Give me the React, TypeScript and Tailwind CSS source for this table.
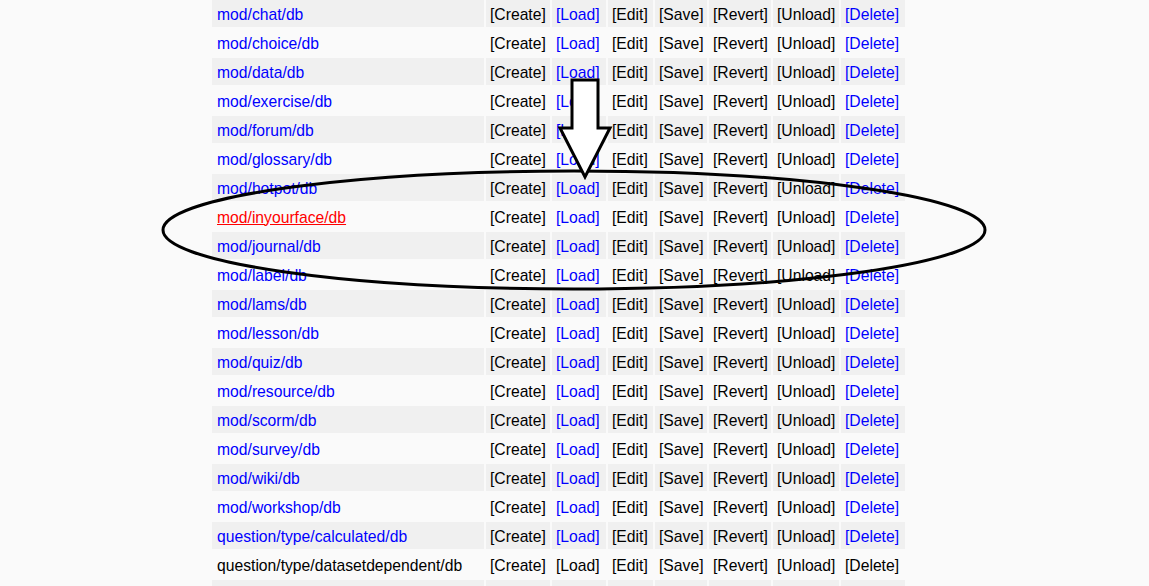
const rows = [
  "mod/chat/db",
  "mod/choice/db",
  "mod/data/db",
  "mod/exercise/db",
  "mod/forum/db",
  "mod/glossary/db",
  "mod/hotpot/db",
  "mod/inyourface/db",
  "mod/journal/db",
  "mod/label/db",
  "mod/lams/db",
  "mod/lesson/db",
  "mod/quiz/db",
  "mod/resource/db",
  "mod/scorm/db",
  "mod/survey/db",
  "mod/wiki/db",
  "mod/workshop/db",
  "question/type/calculated/db",
  "question/type/datasetdependent/db",
  "",
];

const actions = [
  { label: "Create", w: "w-[64px]", link: false },
  { label: "Load", w: "w-[54px]", link: true },
  { label: "Edit", w: "w-[45px]", link: false },
  { label: "Save", w: "w-[52px]", link: false },
  { label: "Revert", w: "w-[62px]", link: false },
  { label: "Unload", w: "w-[66px]", link: false },
  { label: "Delete", w: "w-[64px]", link: true },
];

const Row = ({ path, index }: { path: string; index: number }) => {
  const gray = index % 2 === 0 ? "bg-[#f0f0f0]" : "";
  const active = path.startsWith("mod/") || path === "question/type/calculated/db";
  const current = path === "mod/inyourface/db";

  return (
    <div className="flex h-[27px] shrink-0 gap-[2px]">
      <div className={`w-[272px] pl-[5px] pt-[2px] flex items-center ${gray}`}>
        <span
          className={
            current
              ? "text-[#ff0000] underline"
              : active
              ? "text-[#0000ff]"
              : "text-black"
          }
        >
          {path}
        </span>
      </div>
      {actions.map((a) => (
        <div key={a.label} className={`${a.w} pl-[4px] pt-[2px] flex items-center ${gray}`}>
          {path && (
            <span className={a.link && active ? "text-[#0000ff]" : "text-black"}>
              [{a.label}]
            </span>
          )}
        </div>
      ))}
    </div>
  );
};

export default function App() {
  return (
    <div
      className="relative w-[1149px] h-[586px] overflow-hidden bg-[#fafafa] text-[15.7px] whitespace-nowrap"
      style={{ fontFamily: '"Liberation Sans", Arial, sans-serif' }}
    >
      {/* module table */}
      <div className="ml-[212px] flex flex-col gap-[2px]">
        {rows.map((p, i) => (
          <Row key={i} path={p} index={i} />
        ))}
      </div>

      {/* hand-drawn annotation */}
      <svg
        className="absolute inset-0 pointer-events-none"
        width="1149"
        height="586"
        viewBox="0 0 1149 586"
      >
        <ellipse cx="574" cy="230" rx="411" ry="59" fill="none" stroke="#000" strokeWidth="3" />
        <path
          d="M572 80 H598 V128 H610 L585 177 L560 128 H572 Z"
          fill="#fff"
          stroke="#000"
          strokeWidth="3"
          strokeLinejoin="miter"
        />
      </svg>
    </div>
  );
}
